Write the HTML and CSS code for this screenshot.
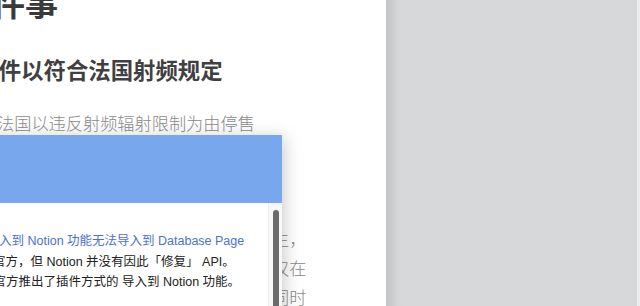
FILE: index.html
```html
<!DOCTYPE html>
<html lang="zh-CN">
<head>
<meta charset="utf-8">
<title>Article</title>
<link rel="stylesheet" href="styles.css">
</head>
<body>
<div class="screen">
  <main class="page">
    <article class="article">
      <h1 class="title">最近的几件事</h1>
      <h2 class="subtitle">苹果发布更新软件以符合法国射频规定</h2>
      <p class="para">
        <span class="line">法国以违反射频辐射限制为由停售</span>
        <span class="line">苹果随后承诺为该机型推送软件更</span>
        <span class="line">此前监管机构的测试结果显示该设</span>
        <span class="line">超出欧盟规定的上限标准并要求整</span>
        <span class="line">复测的结果将决定该机型能否继续产生，</span>
        <span class="line">其他欧洲国家的监管机构也表示关注仅在</span>
        <span class="line">法国市场生效的措施是否需要在本国同时</span>
      </p>
    </article>
    <div class="popup">
      <div class="popup-header"></div>
      <div class="popup-body">
        <div class="popup-content">
          <a class="link">导入到 Notion 功能无法导入到 Database Page</a>
          <p class="note note-a">反馈给了官方，但 Notion 并没有因此「修复」 API。</p>
          <p class="note note-b">之后官方推出了插件方式的 导入到 Notion 功能。</p>
        </div>
        <div class="scroll-track"><div class="scroll-thumb"></div></div>
      </div>
    </div>
  </main>
  <aside class="side"></aside>
</div>
</body>
</html>
```
FILE: styles.css
```css
html, body {
  margin: 0;
  padding: 0;
  width: 640px;
  height: 306px;
  overflow: hidden;
  background: #ffffff;
}

.screen {
  display: flex;
  width: 640px;
  height: 306px;
  font-family: "Noto Sans CJK SC", "Noto Sans", sans-serif;
}

.page {
  position: relative;
  flex: none;
  width: 386px;
  height: 306px;
  overflow: hidden;
  background: #ffffff;
}

.article {
  display: flex;
  flex-direction: column;
  width: 400px;
  margin-left: -94px;
}

.title {
  margin: -18px 0 0 -46px;
  font-size: 33px;
  line-height: 40px;
  font-weight: 700;
  color: #3a3a3a;
  white-space: nowrap;
}

.subtitle {
  margin: 32px 0 0 -64px;
  font-size: 22.4px;
  line-height: 30px;
  font-weight: 700;
  color: #404040;
  white-space: nowrap;
}

.para {
  margin: 24px 0 0 91px;
  font-size: 17.2px;
  line-height: 29px;
  font-weight: 300;
  color: #8a8a8a;
}

.line {
  display: block;
  white-space: nowrap;
}

.popup {
  position: absolute;
  top: 135px;
  left: -200px;
  width: 482px;
  height: 200px;
  display: flex;
  flex-direction: column;
  background: #ffffff;
  box-shadow: 3px 2px 16px rgba(0, 0, 0, 0.2);
}

.popup-header {
  flex: none;
  height: 68px;
  background: #79a7ee;
}

.popup-body {
  flex: 1;
  display: flex;
  min-height: 0;
}

.popup-content {
  flex: 1;
  min-width: 0;
  overflow: hidden;
  padding-top: 28px;
  display: flex;
  flex-direction: column;
  font-family: "Liberation Sans", "Noto Sans CJK SC", sans-serif;
  font-size: 12.5px;
  line-height: 20.5px;
}

.link {
  display: block;
  color: #4a71d3;
  white-space: nowrap;
  margin-left: 186.5px;
}

.note {
  margin: 0;
  color: #222222;
  white-space: nowrap;
}

.note-a {
  margin-left: 143px;
}

.note-b {
  margin-left: 168.5px;
}

.scroll-track {
  flex: none;
  width: 14px;
  padding-top: 7px;
  display: flex;
  justify-content: center;
  background: #f7f7f7;
  border-left: 1px solid #ececec;
  box-sizing: border-box;
}

.scroll-thumb {
  width: 6px;
  height: 140px;
  border-radius: 3px;
  background: #6a6a6a;
}

.side {
  flex: 1;
  height: 306px;
  background: linear-gradient(to right, #c4c5c6 0px, #cbcccd 6px, #d3d4d5 10px, #d7d8d9 16px, #d7d8d9 100%);
  border-right: 3px solid #ececec;
}
```
